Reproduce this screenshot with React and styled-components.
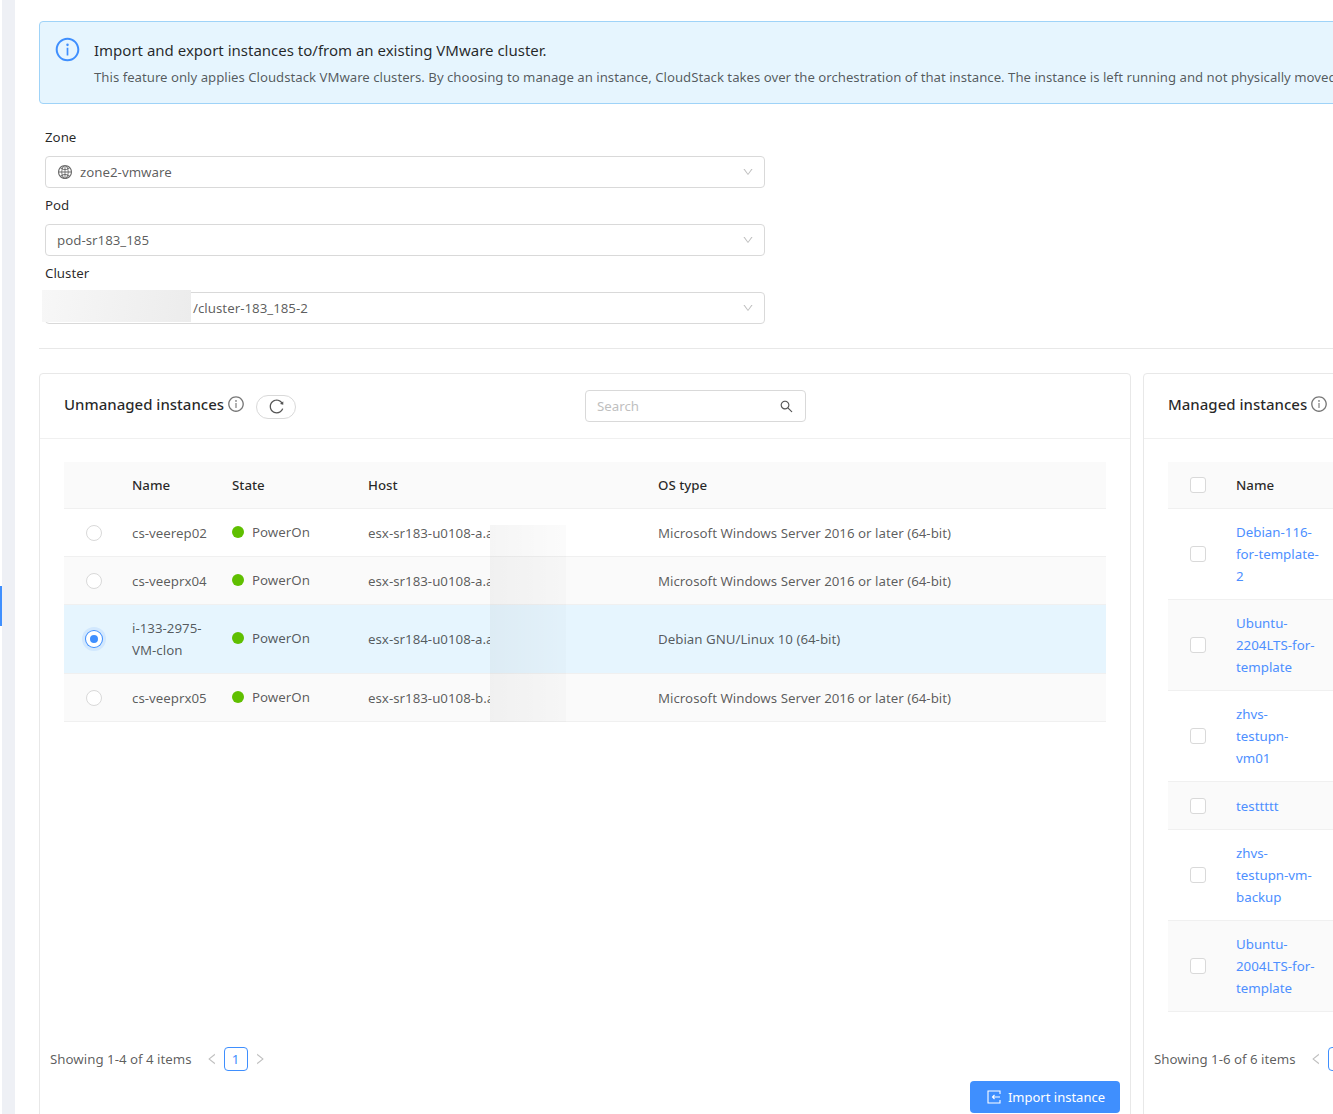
import React from 'react';
import styled, { createGlobalStyle } from 'styled-components';
import { AiOutlineInfoCircle, AiOutlineReload, AiOutlineSearch, AiOutlineDown, AiOutlineLeft, AiOutlineRight, AiOutlineGlobal } from 'react-icons/ai';

const Global = createGlobalStyle`
  html, body { margin: 0; padding: 0; background: #fff; overflow: hidden; height: 1114px; }
  body { font-family: "Noto Sans", "Open Sans", Arial, sans-serif; font-size: 13.3px; line-height: 22px; color: rgba(0,0,0,.65); }
  * { box-sizing: border-box; }
`;

const Page = styled.div`display: flex; width: 1333px; height: 1114px; overflow: hidden;`;
const Rail = styled.aside`flex: 0 0 15px; display: flex; height: 100%;`;
const RailEdge = styled.div`flex: 0 0 2px; padding-top: 586px;`;
const RailMark = styled.div`height: 40px; background: #3f8ffe;`;
const RailFill = styled.div`flex: 1; background: #eef0f5;`;
const Main = styled.main`flex: 1; min-width: 0; padding: 21px 0 0 24px; overflow: hidden;`;

const Alert = styled.section`
  display: flex; gap: 13px; width: 1500px; height: 83px; padding: 15px 15px 15px 14px;
  background: #e6f5fe; border: 1px solid #9fd3f8; border-radius: 4px;
`;
const AlertIcon = styled(AiOutlineInfoCircle)`flex: none; margin-top: -1px; font-size: 27px; color: #3f8ffe;`;
const AlertBody = styled.div`padding-top: 1px;`;
const AlertTitle = styled.div`font-size: 15px; line-height: 24px; color: rgba(0,0,0,.85); white-space: nowrap;`;
const AlertText = styled.div`margin-top: 4px; font-size: 13.2px; line-height: 22px; white-space: nowrap;`;

const Form = styled.form`display: flex; flex-direction: column; padding: 0 0 24px 6px; width: 726px;`;
const Field = styled.div`position: relative; display: flex; flex-direction: column; padding-top: ${p => p.$first ? '16px' : '0'}; height: ${p => p.$first ? '84px' : '68px'};`;
const Label = styled.label`flex: 0 0 36px; padding-top: 6px; line-height: 22px; color: rgba(0,0,0,.85);`;
const Select = styled.div`
  flex: 0 0 32px; display: flex; align-items: center; gap: 7px; padding: 0 10px 0 11px;
  border: 1px solid #d9d9d9; border-radius: 4px; background: #fff;
`;
const SelectValue = styled.span`flex: 1; padding-left: ${p => p.$pad || 0}px;`;
const GlobeIcon = styled(AiOutlineGlobal)`font-size: 16px; color: #6b6b6b;`;
const Chevron = styled(AiOutlineDown)`font-size: 12px; color: #bfbfbf;`;
const MaskCluster = styled.div`
  position: absolute; left: -3px; bottom: 2px; width: 149px; height: 32px;
  background: linear-gradient(100deg, #f7f7f7, #ececec);
`;

const Divider = styled.hr`margin: 0 0 24px; border: 0; border-top: 1px solid #e8e8e8; width: 1400px;`;
const Panels = styled.div`display: flex; gap: 12px; width: 1500px;`;
const Panel = styled.section`
  flex: 0 0 ${p => p.$w}px; height: 780px; border: 1px solid #e8e8e8; border-radius: 4px; background: #fff;
`;
const PanelHead = styled.header`
  display: flex; align-items: center; height: 65px; padding: 0 24px; border-bottom: 1px solid #f0f0f0;
`;
const TitleGroup = styled.div`flex: 0 0 521px; display: flex; align-items: center;`;
const TitleLine = styled.div`display: flex; align-items: center; margin-bottom: 5px;`;
const Title = styled.h2`margin: 0; font-size: 15px; font-weight: 500; line-height: 24px; color: rgba(0,0,0,.85);`;
const TitleInfo = styled(AiOutlineInfoCircle)`margin-left: 3px; font-size: 18px; color: #777;`;
const RoundBtn = styled.button`
  display: flex; align-items: center; justify-content: center; width: 40px; height: 24px; margin-left: 11px; margin-top: 1px; padding: 0;
  border: 1px solid #d9d9d9; border-radius: 12px; background: #fff; color: #555; font-size: 17px;
`;
const Search = styled.div`
  display: flex; align-items: center; justify-content: space-between; width: 221px; height: 32px; padding: 0 11px 0 11px;
  border: 1px solid #d9d9d9; border-radius: 4px; color: #bfbfbf;
`;
const SearchIcon = styled(AiOutlineSearch)`font-size: 15px; color: #555;`;

const TableArea = styled.div`position: relative; height: 608px; padding: 23px 24px 0;`;
const Table = styled.table`border-collapse: separate; border-spacing: 0; table-layout: fixed; width: ${p => p.$w}px;`;
const Th = styled.th`
  height: 47px; padding: 0 0 0 16px; text-align: left; font-weight: 500; background: #fafafa;
  color: rgba(0,0,0,.85); border-bottom: 1px solid #f0f0f0;
`;
const SelTh = styled(Th)`padding: 0 0 0 22px;`;
const Row = styled.tr`background: ${p => p.$sel ? '#e6f5fe' : p.$alt ? '#fafafa' : '#fff'};`;
const Td = styled.td`height: 48px; padding: 12px 0 12px 16px; border-bottom: 1px solid #f0f0f0;`;
const SelTd = styled(Td)`padding: 0 0 0 22px;`;
const HostClip = styled.span`display: block; width: 122px; white-space: nowrap; overflow: hidden;`;
const Badge = styled.div`display: flex; align-items: center; gap: 8px; margin-top: -2px;`;
const Dot = styled.span`width: 12px; height: 12px; border-radius: 50%; background: #5fbf00;`;
const Radio = styled.span`
  display: block; width: 16px; height: 16px; border-radius: 50%; background: #fff;
  border: ${p => p.$on ? '4px solid #fff' : '1px solid #d9d9d9'};
  ${p => p.$on ? 'background: #3f8ffe; box-shadow: 0 0 0 1px #3f8ffe, 0 0 0 4px rgba(63,143,254,.12);' : ''}
`;
const Check = styled.span`display: block; width: 16px; height: 16px; border: 1px solid #d9d9d9; border-radius: 3px; background: #fff;`;
const LinkText = styled.a`color: #4d8fff; text-decoration: none;`;
const MaskHost = styled.div`
  position: absolute; left: 450px; top: 86px; width: 76px; height: 197px;
  background: linear-gradient(90deg, rgba(0,0,0,.04), rgba(0,0,0,.015));
`;

const Pager = styled.div`display: flex; align-items: center; height: 24px; padding-left: 10px;`;
const PagerText = styled.span`margin-right: 12px;`;
const PageArrow = styled.span`display: flex; width: 16px; justify-content: center; font-size: 14px; color: #bfbfbf;`;
const PageNum = styled.span`
  display: flex; align-items: center; justify-content: center; flex: none; width: 24px; height: 24px; margin: 0 4px;
  border: 1px solid #3f8ffe; border-radius: 4px; color: #3f8ffe;
`;
const Foot = styled.div`display: flex; justify-content: flex-end; padding: 10px 10px 0 0;`;
const Primary = styled.button`
  display: flex; align-items: center; gap: 7px; height: 32px; padding: 0 15px 0 17px; border: 0; border-radius: 4px;
  background: #3f8ffe; color: #fff; font-family: inherit; font-size: 13px;
`;

const ImportGlyph = () => (
  <svg width="14" height="14" viewBox="0 0 14 14" fill="none" stroke="currentColor" strokeWidth="1.1">
    <path d="M13 4V1H1v12h12v-3" />
    <path d="M13 7H5.5M7.5 5L5.5 7l2 2" />
  </svg>
);

const un = [
  ['cs-veerep02', 'esx-sr183-u0108-a.a', 'Microsoft Windows Server 2016 or later (64-bit)'],
  ['cs-veeprx04', 'esx-sr183-u0108-a.a', 'Microsoft Windows Server 2016 or later (64-bit)'],
  ['i-133-2975-VM-clon', 'esx-sr184-u0108-a.a', 'Debian GNU/Linux 10 (64-bit)', true],
  ['cs-veeprx05', 'esx-sr183-u0108-b.a', 'Microsoft Windows Server 2016 or later (64-bit)'],
];
const managed = ['Debian-116-for-template-2', 'Ubuntu-2204LTS-for-template', 'zhvs-testupn-vm01', 'testtttt', 'zhvs-testupn-vm-backup', 'Ubuntu-2004LTS-for-template'];

export default function App() {
  return (
    <Page>
      <Global />
      <Rail><RailEdge><RailMark /></RailEdge><RailFill /></Rail>
      <Main>
        <Alert>
          <AlertIcon />
          <AlertBody>
            <AlertTitle>Import and export instances to/from an existing VMware cluster.</AlertTitle>
            <AlertText>This feature only applies Cloudstack VMware clusters. By choosing to manage an instance, CloudStack takes over the orchestration of that instance. The instance is left running and not physically moved.</AlertText>
          </AlertBody>
        </Alert>
        <Form>
          <Field $first>
            <Label>Zone</Label>
            <Select><GlobeIcon /><SelectValue>zone2-vmware</SelectValue><Chevron /></Select>
          </Field>
          <Field>
            <Label>Pod</Label>
            <Select><SelectValue>pod-sr183_185</SelectValue><Chevron /></Select>
          </Field>
          <Field>
            <Label>Cluster</Label>
            <Select><SelectValue $pad={136}>/cluster-183_185-2</SelectValue><Chevron /></Select>
            <MaskCluster />
          </Field>
        </Form>
        <Divider />
        <Panels>
          <Panel $w={1092}>
            <PanelHead>
              <TitleGroup>
                <TitleLine><Title>Unmanaged instances</Title><TitleInfo /></TitleLine>
                <RoundBtn><AiOutlineReload /></RoundBtn>
              </TitleGroup>
              <Search>Search<SearchIcon /></Search>
            </PanelHead>
            <TableArea>
              <Table $w={1042}>
                <colgroup><col width="52" /><col width="100" /><col width="136" /><col width="290" /><col width="464" /></colgroup>
                <thead><tr><SelTh /><Th>Name</Th><Th>State</Th><Th>Host</Th><Th>OS type</Th></tr></thead>
                <tbody>
                  {un.map((r, i) => (
                    <Row key={r[0]} $alt={i % 2 === 1} $sel={r[3]}>
                      <SelTd><Radio $on={r[3]} /></SelTd>
                      <Td>{r[0]}</Td>
                      <Td><Badge><Dot />PowerOn</Badge></Td>
                      <Td><HostClip>{r[1]}</HostClip></Td>
                      <Td>{r[2]}</Td>
                    </Row>
                  ))}
                </tbody>
              </Table>
              <MaskHost />
            </TableArea>
            <Pager>
              <PagerText>Showing 1-4 of 4 items</PagerText>
              <PageArrow><AiOutlineLeft /></PageArrow><PageNum>1</PageNum><PageArrow><AiOutlineRight /></PageArrow>
            </Pager>
            <Foot><Primary><ImportGlyph />Import instance</Primary></Foot>
          </Panel>
          <Panel $w={320}>
            <PanelHead>
              <TitleLine><Title>Managed instances</Title><TitleInfo /></TitleLine>
            </PanelHead>
            <TableArea>
              <Table $w={272}>
                <colgroup><col width="52" /><col width="100" /><col width="120" /></colgroup>
                <thead><tr><SelTh><Check /></SelTh><Th>Name</Th><Th /></tr></thead>
                <tbody>
                  {managed.map((n, i) => (
                    <Row key={n} $alt={i % 2 === 1}>
                      <SelTd><Check /></SelTd>
                      <Td><LinkText>{n}</LinkText></Td>
                      <Td />
                    </Row>
                  ))}
                </tbody>
              </Table>
            </TableArea>
            <Pager>
              <PagerText>Showing 1-6 of 6 items</PagerText>
              <PageArrow><AiOutlineLeft /></PageArrow><PageNum>1</PageNum>
            </Pager>
          </Panel>
        </Panels>
      </Main>
    </Page>
  );
}
